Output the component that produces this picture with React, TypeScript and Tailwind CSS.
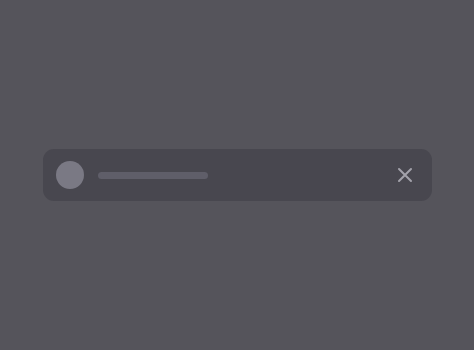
export default function App() {
  return (
    <div className="w-[474px] h-[350px] bg-[#55545b] flex items-center justify-center">
      <div className="w-[389px] h-[52px] rounded-[11px] bg-[#48474f] flex items-center pl-[13px] pr-[17px]">
        <div className="size-[28px] rounded-full bg-[#7a7984] shrink-0" />
        <div className="ml-[14px] w-[110px] h-[7px] rounded-full bg-[#5f5e69]" />
        <button type="button" className="ml-auto size-[20px] grid place-items-center text-[#a3a2ab]">
          <svg width="16" height="16" viewBox="0 0 16 16" fill="none" stroke="currentColor" strokeWidth="2" strokeLinecap="round">
            <path d="M2 2 L14 14 M14 2 L2 14" />
          </svg>
        </button>
      </div>
    </div>
  );
}
